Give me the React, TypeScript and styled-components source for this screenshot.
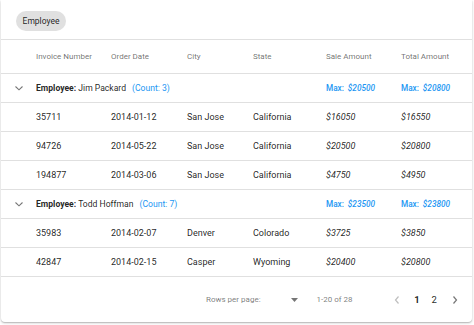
import React from 'react'
import styled, { createGlobalStyle } from 'styled-components'

const GlobalStyle = createGlobalStyle`
  html, body {
    margin: 0;
    padding: 0;
    background: #fff;
    font-family: Roboto, "Liberation Sans", Arial, sans-serif;
  }
`

const COLS = '35px 75px 76px 66px 73px 75px 1fr'

const Card = styled.div`
  margin: 0 2px 3px 1px;
  background: #fff;
  box-shadow: 0 1px 3px rgba(0, 0, 0, 0.2), 0 1px 1px rgba(0, 0, 0, 0.14);
  border-radius: 0 0 4px 4px;
`

const Toolbar = styled.div`
  height: 40px;
  display: flex;
  align-items: center;
  padding-left: 15px;
  border-bottom: 1px solid #e0e0e0;
  box-sizing: border-box;
`

const Chip = styled.span`
  background: #e0e0e0;
  border-radius: 10px;
  height: 20px;
  width: 50px;
  justify-content: center;
  display: inline-flex;
  align-items: center;
  font-size: 8.5px;
  color: rgba(0, 0, 0, 0.87);
  margin-top: 3px;
`

const Row = styled.div<{ $height: number }>`
  display: grid;
  grid-template-columns: ${COLS};
  align-items: center;
  height: ${({ $height }) => $height}px;
  border-bottom: 1px solid #e0e0e0;
  box-sizing: border-box;
  font-size: 9px;
  color: rgba(0, 0, 0, 0.87);
`

const HeadCell = styled.div`
  font-size: 8px;
  color: rgba(0, 0, 0, 0.58);
  white-space: nowrap;
`

const Cell = styled.div<{ $italic?: boolean }>`
  font-style: ${({ $italic }) => ($italic ? 'italic' : 'normal')};
  white-space: nowrap;
`

const Toggle = styled.div`
  display: flex;
  justify-content: center;
  padding-left: 1px;
  color: rgba(0, 0, 0, 0.54);
`

const GroupLabel = styled.div`
  grid-column: 2 / 6;
  white-space: nowrap;
  font-size: 8.6px;
`

const Bold = styled.b`
  font-weight: 700;
`

const Count = styled.span`
  color: #2196f3;
  margin-left: 6px;
`

const Max = styled.div`
  color: #2196f3;
  white-space: nowrap;
  font-weight: 500;
  font-size: 8.2px;
  i {
    margin-left: 4px;
  }
`

const Footer = styled.div`
  height: 45px;
  display: flex;
  align-items: center;
  font-size: 8px;
  color: rgba(0, 0, 0, 0.54);
`

const RowsLabel = styled.span`
  margin-left: 205px;
`

const Select = styled.span`
  margin-left: 30px;
  width: 8px;
  display: inline-flex;
  justify-content: center;
`

const Range = styled.span`
  margin-left: 18px;
`

const Pager = styled.div`
  margin-left: 32px;
  display: flex;
  align-items: center;
`

const PageButton = styled.span<{ $active?: boolean }>`
  font-size: 9.5px;
  color: rgba(0, 0, 0, 0.87);
  font-weight: ${({ $active }) => ($active ? 700 : 400)};
  width: 17px;
  text-align: center;
`

const Arrow = styled.span<{ $disabled?: boolean }>`
  display: inline-flex;
  color: ${({ $disabled }) => ($disabled ? 'rgba(0,0,0,0.26)' : 'rgba(0,0,0,0.54)')};
  width: 24px;
  justify-content: center;
`

const ChevronDown = () => (
  <svg width="10" height="10" viewBox="0 0 10 10">
    <polyline points="1.5,3.5 5,6.8 8.5,3.5" fill="none" stroke="currentColor" strokeWidth="1.1" />
  </svg>
)

const Chevron = ({ dir }: { dir: 'left' | 'right' }) => (
  <svg width="8" height="10" viewBox="0 0 8 10">
    <polyline
      points={dir === 'left' ? '5.5,1.5 2.5,5 5.5,8.5' : '2.5,1.5 5.5,5 2.5,8.5'}
      fill="none"
      stroke="currentColor"
      strokeWidth="1.2"
    />
  </svg>
)

interface Order {
  invoice: string
  date: string
  city: string
  state: string
  sale: string
  total: string
}

interface Group {
  employee: string
  count: number
  maxSale: string
  maxTotal: string
  orders: Order[]
}

const groups: Group[] = [
  {
    employee: 'Jim Packard',
    count: 3,
    maxSale: '$20500',
    maxTotal: '$20800',
    orders: [
      { invoice: '35711', date: '2014-01-12', city: 'San Jose', state: 'California', sale: '$16050', total: '$16550' },
      { invoice: '94726', date: '2014-05-22', city: 'San Jose', state: 'California', sale: '$20500', total: '$20800' },
      { invoice: '194877', date: '2014-03-06', city: 'San Jose', state: 'California', sale: '$4750', total: '$4950' },
    ],
  },
  {
    employee: 'Todd Hoffman',
    count: 7,
    maxSale: '$23500',
    maxTotal: '$23800',
    orders: [
      { invoice: '35983', date: '2014-02-07', city: 'Denver', state: 'Colorado', sale: '$3725', total: '$3850' },
      { invoice: '42847', date: '2014-02-15', city: 'Casper', state: 'Wyoming', sale: '$20400', total: '$20800' },
    ],
  },
]

const headers = ['Invoice Number', 'Order Date', 'City', 'State', 'Sale Amount', 'Total Amount']

export default function App() {
  return (
    <>
      <GlobalStyle />
      <Card>
        <Toolbar>
          <Chip>Employee</Chip>
        </Toolbar>
        <Row $height={34}>
          <div />
          {headers.map((h) => (
            <HeadCell key={h}>{h}</HeadCell>
          ))}
        </Row>
        {groups.map((g) => (
          <React.Fragment key={g.employee}>
            <Row $height={29}>
              <Toggle>
                <ChevronDown />
              </Toggle>
              <GroupLabel>
                <Bold>Employee:</Bold> {g.employee}
                <Count>(Count: {g.count})</Count>
              </GroupLabel>
              <Max>
                Max:<i>{g.maxSale}</i>
              </Max>
              <Max>
                Max:<i>{g.maxTotal}</i>
              </Max>
            </Row>
            {g.orders.map((o) => (
              <Row $height={29} key={o.invoice}>
                <div />
                <Cell>{o.invoice}</Cell>
                <Cell>{o.date}</Cell>
                <Cell>{o.city}</Cell>
                <Cell>{o.state}</Cell>
                <Cell $italic>{o.sale}</Cell>
                <Cell $italic>{o.total}</Cell>
              </Row>
            ))}
          </React.Fragment>
        ))}
        <Footer>
          <RowsLabel>Rows per page:</RowsLabel>
          <Select>
            <svg width="7" height="4" viewBox="0 0 7 4">
              <polygon points="0,0 7,0 3.5,4" fill="rgba(0,0,0,0.54)" />
            </svg>
          </Select>
          <Range>1-20 of 28</Range>
          <Pager>
            <Arrow $disabled>
              <Chevron dir="left" />
            </Arrow>
            <PageButton $active>1</PageButton>
            <PageButton>2</PageButton>
            <Arrow>
              <Chevron dir="right" />
            </Arrow>
          </Pager>
        </Footer>
      </Card>
    </>
  )
}
